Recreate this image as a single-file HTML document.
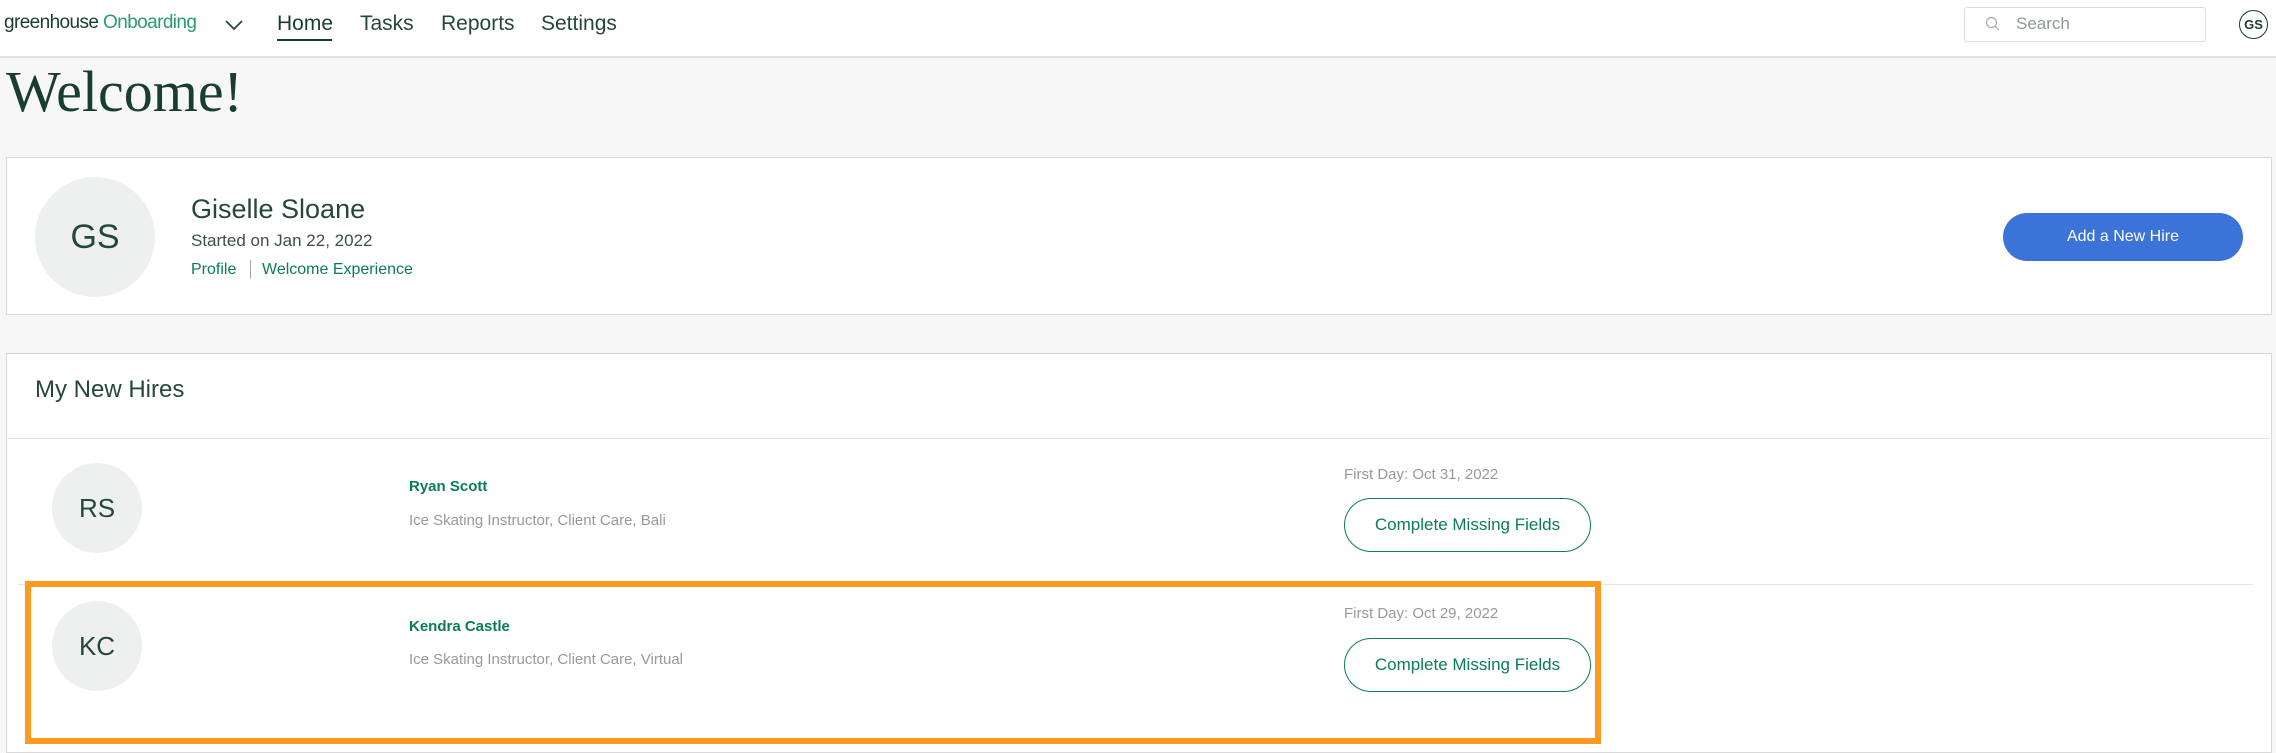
<!DOCTYPE html>
<html><head><meta charset="utf-8"><style>
*{margin:0;padding:0;box-sizing:border-box}
body{width:2276px;height:747px;background:#f7f7f7;font-family:"Liberation Sans",sans-serif;position:relative;overflow:hidden;color:#24473c}
.a{position:absolute;white-space:nowrap}
.nav{position:absolute;left:0;top:0;width:2276px;height:58px;background:#fff;border-bottom:2px solid #e2e2e2}
.card{position:absolute;background:#fff;border:1.5px solid #d9d9d9}
.circ{position:absolute;border-radius:50%;background:#eef0ef;color:#24473c;display:flex;align-items:center;justify-content:center}
.name{font-weight:bold;font-size:15px;color:#0a7c5a}
.sub{font-size:15px;color:#999}
.fd{font-size:15px;color:#999}
.btn{position:absolute;width:247px;height:54px;border:1.5px solid #0a7c5a;border-radius:27px;color:#0a7c5a;font-size:17px;display:flex;align-items:center;justify-content:center;background:#fff}
</style></head><body>
<div class="nav">
 <div class="a" style="left:4px;top:12px;font-size:19px;color:#183d33;letter-spacing:-0.6px">greenhouse <span style="color:#2a9d6f">Onboarding</span></div>
 <svg class="a" style="left:224px;top:19px" width="20" height="12" viewBox="0 0 20 12"><path d="M2 2 L10 10 L18 2" stroke="#24473c" stroke-width="1.8" fill="none"/></svg>
 <div class="a" style="left:277px;top:12px;font-size:21px;color:#183d33">Home</div>
 <div class="a" style="left:277px;top:39px;width:55px;height:2px;background:#183d33"></div>
 <div class="a" style="left:360px;top:12px;font-size:21px;color:#24473c">Tasks</div>
 <div class="a" style="left:441px;top:12px;font-size:21px;color:#24473c">Reports</div>
 <div class="a" style="left:541px;top:12px;font-size:21px;color:#24473c">Settings</div>
 <div class="a" style="left:1964px;top:7px;width:242px;height:35px;border:1px solid #ddd;border-radius:3px"></div>
 <svg class="a" style="left:1985px;top:16px" width="16" height="16" viewBox="0 0 16 16"><circle cx="6.5" cy="6.5" r="5" stroke="#aaa" stroke-width="1.2" fill="none"/><path d="M10 10 L14 14" stroke="#aaa" stroke-width="1.2"/></svg>
 <div class="a" style="left:2016px;top:14px;font-size:17px;color:#8a9a94">Search</div>
 <div class="a" style="left:2239px;top:10px;width:29px;height:29px;border:1.5px solid #183d33;border-radius:50%;font-size:13px;font-weight:bold;color:#183d33;display:flex;align-items:center;justify-content:center">GS</div>
</div>
<div class="a" style="left:6px;top:58px;font-family:'Liberation Serif',serif;font-size:58px;color:#183d33">Welcome!</div>
<div class="card" style="left:6px;top:157px;width:2266px;height:158px"></div>
<div class="circ" style="left:35px;top:177px;width:120px;height:120px;font-size:34px">GS</div>
<div class="a" style="left:191px;top:194px;font-size:27px;color:#24473c">Giselle Sloane</div>
<div class="a" style="left:191px;top:231px;font-size:17px;color:#3d4f49">Started on Jan 22, 2022</div>
<div class="a" style="left:191px;top:261px;font-size:16px;color:#0a7c5a">Profile</div>
<div class="a" style="left:250px;top:260px;width:1px;height:19px;background:#aaa"></div>
<div class="a" style="left:262px;top:261px;font-size:16px;color:#0a7c5a">Welcome Experience</div>
<div class="a" style="left:2003px;top:213px;width:240px;height:48px;border-radius:24px;background:#3b73d9;color:#fff;font-size:16px;display:flex;align-items:center;justify-content:center">Add a New Hire</div>
<div class="card" style="left:6px;top:353px;width:2266px;height:400px"></div>
<div class="a" style="left:35px;top:376px;font-size:24px;color:#24473c">My New Hires</div>
<div class="a" style="left:8px;top:438px;width:2262px;height:1px;background:#e4e4e4"></div>
<div class="circ" style="left:52px;top:463px;width:90px;height:90px;font-size:26px">RS</div>
<div class="a name" style="left:409px;top:478px">Ryan Scott</div>
<div class="a sub" style="left:409px;top:512px">Ice Skating Instructor, Client Care, Bali</div>
<div class="a fd" style="left:1344px;top:466px">First Day: Oct 31, 2022</div>
<div class="btn" style="left:1344px;top:498px">Complete Missing Fields</div>
<div class="a" style="left:18px;top:584px;width:2235px;height:1px;background:#e4e4e4"></div>
<div class="circ" style="left:52px;top:601px;width:90px;height:90px;font-size:26px">KC</div>
<div class="a name" style="left:409px;top:618px">Kendra Castle</div>
<div class="a sub" style="left:409px;top:651px">Ice Skating Instructor, Client Care, Virtual</div>
<div class="a fd" style="left:1344px;top:605px">First Day: Oct 29, 2022</div>
<div class="btn" style="left:1344px;top:638px">Complete Missing Fields</div>
<div class="a" style="left:25px;top:581px;width:1576px;height:163px;border:6px solid #ff9a1f"></div>
</body></html>
